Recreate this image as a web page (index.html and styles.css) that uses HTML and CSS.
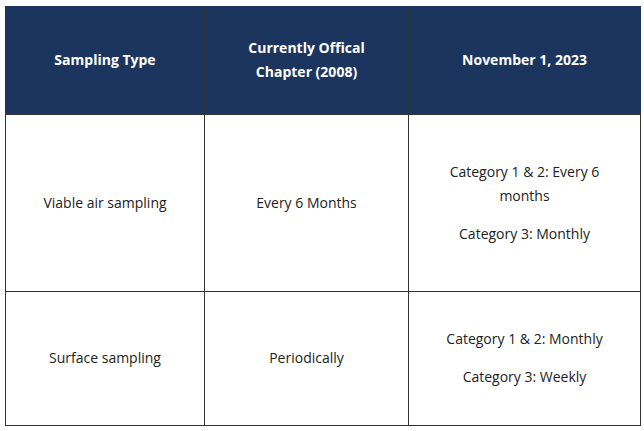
FILE: index.html
```html
<!DOCTYPE html>
<html>
<head>
<meta charset="utf-8">
<link rel="stylesheet" href="styles.css">
</head>
<body>
<table class="freq">
  <colgroup>
    <col class="c1">
    <col class="c2">
    <col class="c3">
  </colgroup>
  <thead>
    <tr class="head">
      <th>Sampling Type</th>
      <th>Currently Offical Chapter (2008)</th>
      <th>November 1, 2023</th>
    </tr>
  </thead>
  <tbody>
    <tr class="r1">
      <td>Viable air sampling</td>
      <td>Every 6 Months</td>
      <td><p>Category 1 &amp; 2: Every 6 months</p><p>Category 3: Monthly</p></td>
    </tr>
    <tr class="r2">
      <td>Surface sampling</td>
      <td>Periodically</td>
      <td><p>Category 1 &amp; 2: Monthly</p><p>Category 3: Weekly</p></td>
    </tr>
  </tbody>
</table>
</body>
</html>
```
FILE: styles.css
```css
html, body {
  margin: 0;
  padding: 0;
  background: #ffffff;
}
body {
  font-family: "Open Sans", "Liberation Sans", sans-serif;
  font-size: 14px;
  line-height: 24px;
  color: #222222;
}
.freq {
  margin: 6px 0 0 5px;
  width: 635px;
  border-collapse: collapse;
  table-layout: fixed;
}
.c1 { width: 199px; }
.c2 { width: 204px; }
.c3 { width: 232px; }
.freq th,
.freq td {
  border: 1px solid #333333;
  text-align: center;
  vertical-align: middle;
  padding: 0 22px;
}
.freq th {
  background: #1c355e;
  color: #ffffff;
  font-weight: 700;
  border-top: none;
  padding: 0 36px;
}
.freq th:first-child { border-left-color: #1c355e; }
.freq th:last-child { border-right-color: #1c355e; }
.head { height: 108px; }
.r1 { height: 177px; }
.r2 { height: 134px; }
.freq p { margin: 0; }
.freq p + p { margin-top: 14px; }
```
